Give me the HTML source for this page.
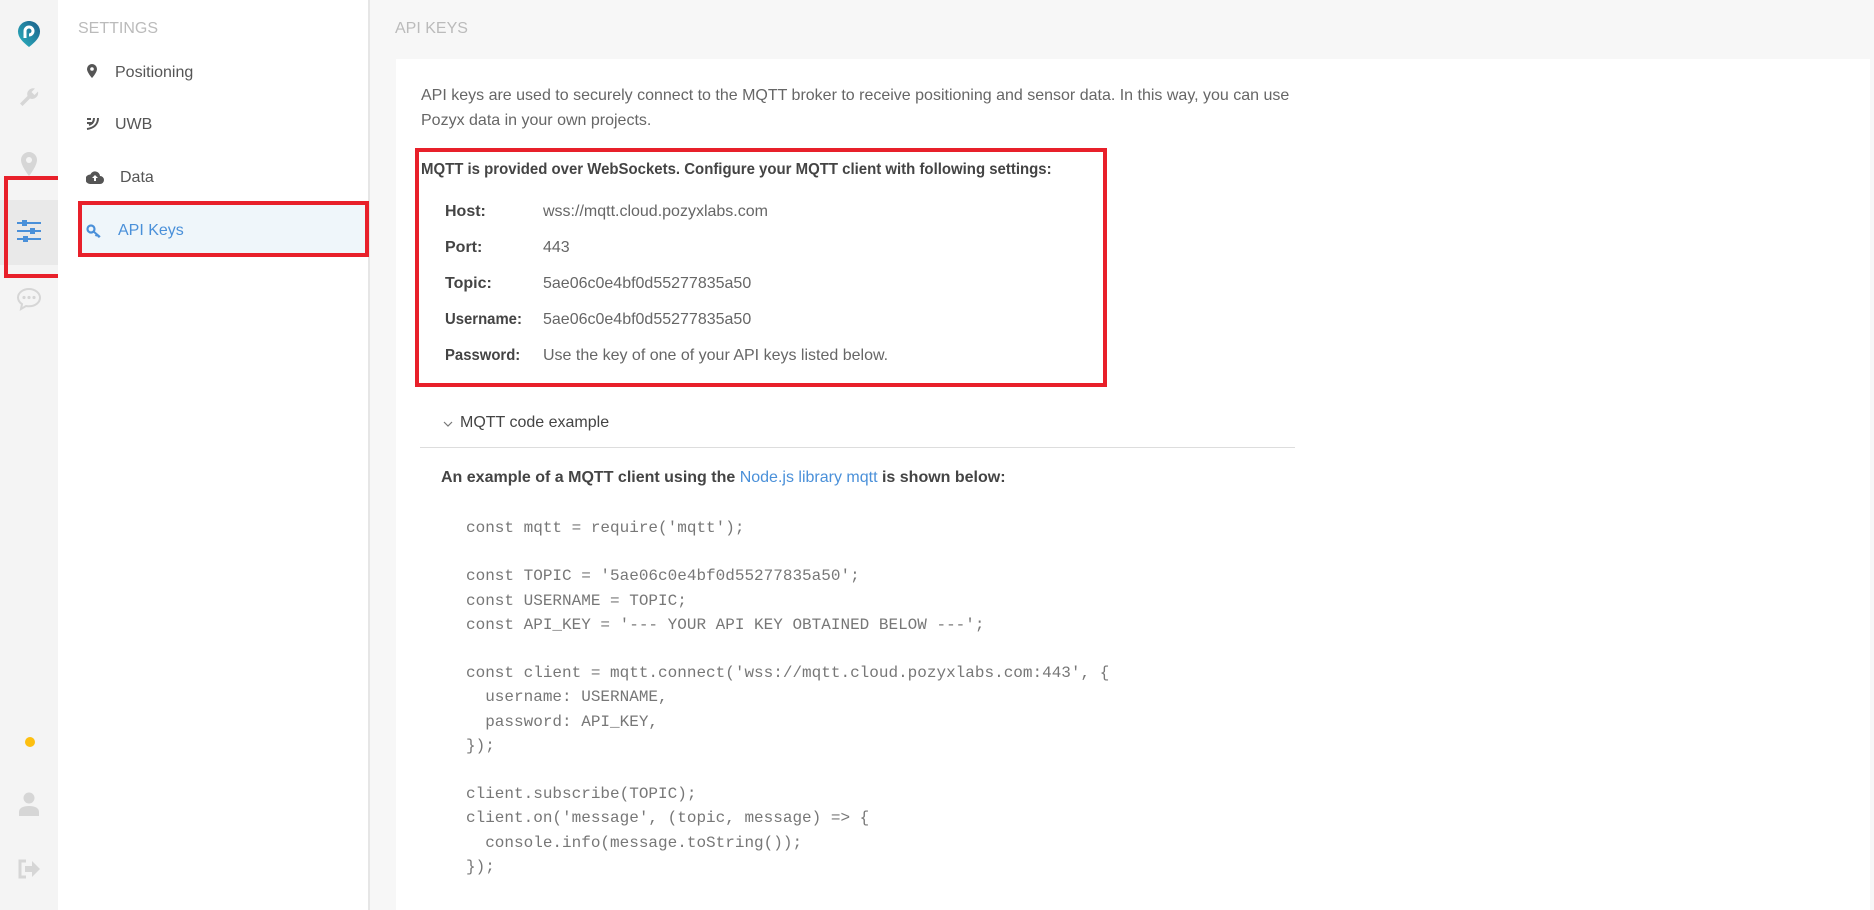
<!DOCTYPE html>
<html><head><meta charset="utf-8"><style>
*{margin:0;padding:0;box-sizing:border-box}
body{width:1874px;height:910px;overflow:hidden;background:#f7f7f7;font-family:"Liberation Sans",sans-serif;position:relative;color:#666}
.a{position:absolute}
#bar{left:0;top:0;width:58px;height:910px;background:#f4f4f4}
#menu{left:58px;top:0;width:312px;height:910px;background:#fff;border-right:2px solid #e6e6e6}
.t{position:absolute;font-size:16px;white-space:nowrap;color:#666}
.b{font-weight:bold;color:#444}
.code{position:absolute;left:466px;font-family:"Liberation Mono",monospace;font-size:16px;color:#777;white-space:pre;line-height:24.2px}
.red{position:absolute;border:4px solid #e8202a}
</style></head><body>
<div id="bar" class="a"></div>
<svg class="a" style="left:17px;top:20px" width="24" height="28" viewBox="0 0 24 28"><defs><linearGradient id="g" x1="0" y1="1" x2="1" y2="0"><stop offset="0" stop-color="#2bb3c0"/><stop offset="1" stop-color="#1c5f8a"/></linearGradient></defs><path d="M12 1C5.9 1 1 5.7 1 11.6c0 6 5 10.5 11 15.4 6-4.9 11-9.4 11-15.4C23 5.7 18.1 1 12 1z" fill="url(#g)"/><path d="M8 18v-7a4 4 0 1 1 4 4" stroke="#fff" stroke-width="3" fill="none"/></svg>
<svg class="a" style="left:17px;top:85px" width="24" height="24" viewBox="0 0 24 24"><path d="M21 6.5l-3.5 3.5-3-3L18 3.5A6 6 0 0 0 10.5 11L3 18.5 5.5 21 13 13.5A6 6 0 0 0 21 6.5z" fill="#d6d6d6"/></svg>
<svg class="a" style="left:19px;top:151px" width="20" height="26" viewBox="0 0 20 26"><path d="M10 1a8 8 0 0 0-8 8c0 6 8 16 8 16s8-10 8-16a8 8 0 0 0-8-8z" fill="#d6d6d6"/><circle cx="10" cy="9" r="3" fill="#f4f4f4"/></svg>
<div class="a" style="left:0;top:200px;width:58px;height:65px;background:#e9e9e9"></div>
<svg class="a" style="left:17px;top:220px" width="24" height="22" viewBox="0 0 24 22"><g stroke="#4a90d9" stroke-width="2"><line x1="0" y1="3" x2="24" y2="3"/><line x1="0" y1="11" x2="24" y2="11"/><line x1="0" y1="19" x2="24" y2="19"/></g><g fill="#4a90d9"><rect x="5" y="0" width="5" height="6"/><rect x="13" y="8" width="5" height="6"/><rect x="6" y="16" width="5" height="6"/></g></svg>
<svg class="a" style="left:16px;top:287px" width="26" height="24" viewBox="0 0 26 24"><path d="M13 2C6.9 2 2 5.8 2 10.5c0 2.7 1.6 5 4 6.6L5 22l5-3c1 .2 2 .3 3 .3 6.1 0 11-3.8 11-8.5S19.1 2 13 2z" fill="none" stroke="#d6d6d6" stroke-width="2"/><g fill="#d6d6d6"><circle cx="8" cy="10.5" r="1.6"/><circle cx="13" cy="10.5" r="1.6"/><circle cx="18" cy="10.5" r="1.6"/></g></svg>
<div class="a" style="left:25px;top:737px;width:10px;height:10px;border-radius:50%;background:#fdbf0f"></div>
<svg class="a" style="left:18px;top:792px" width="22" height="24" viewBox="0 0 22 24"><circle cx="11" cy="6" r="5.5" fill="#d6d6d6"/><path d="M1 24v-4c0-4 4-6 10-6s10 2 10 6v4z" fill="#d6d6d6"/></svg>
<svg class="a" style="left:17px;top:858px" width="24" height="22" viewBox="0 0 24 22"><path d="M9 3H3v16h6" fill="none" stroke="#d6d6d6" stroke-width="3"/><path d="M8 8h7V3l8 8-8 8v-5H8z" fill="#d6d6d6"/></svg>
<div class="red" style="left:4px;top:176px;width:59px;height:102px"></div>

<div id="menu" class="a"></div>
<div class="t" style="left:78px;top:20px;color:#bbb;font-size:16px">SETTINGS</div>
<svg class="a" style="left:87px;top:64px" width="10" height="14" viewBox="0 0 10 14"><path d="M5 0a5 5 0 0 0-5 5c0 3.5 5 9 5 9s5-5.5 5-9a5 5 0 0 0-5-5z" fill="#555"/><circle cx="5" cy="5" r="1.8" fill="#fff"/></svg>
<div class="t" style="left:115px;top:64px;color:#555">Positioning</div>
<svg class="a" style="left:86px;top:117px" width="14" height="13" viewBox="0 0 14 13"><path d="M1 2h4M1 6h6M12 1c0 6-4 10-11 11M8 1c0 4-2 6-5 7" stroke="#555" stroke-width="2" fill="none"/></svg>
<div class="t" style="left:115px;top:116px;color:#555">UWB</div>
<svg class="a" style="left:86px;top:171px" width="18" height="13" viewBox="0 0 18 13"><path d="M14 5a5 5 0 0 0-9.6-1.5A4 4 0 0 0 4 13h10a4 4 0 0 0 0-8z" fill="#555"/><path d="M9 4l-3 3h2v3h2V7h2z" fill="#fff"/></svg>
<div class="t" style="left:120px;top:169px;color:#555">Data</div>
<div class="a" style="left:79px;top:204px;width:290px;height:52px;background:#eff6fa"></div>
<svg class="a" style="left:86px;top:224px" width="16" height="14" viewBox="0 0 16 14"><circle cx="5" cy="5" r="3.5" fill="none" stroke="#4a90d9" stroke-width="2.2"/><path d="M7.5 7.5L14 13M11 10.5l-1.5 1.5M13 12l-1.2 1.2" stroke="#4a90d9" stroke-width="2" fill="none"/></svg>
<div class="t" style="left:118px;top:222px;color:#4a90d9">API Keys</div>
<div class="red" style="left:78px;top:201px;width:291px;height:56px"></div>

<div class="t" style="left:395px;top:20px;color:#bbb">API KEYS</div>
<div class="a" style="left:396px;top:59px;width:1474px;height:851px;background:#fff"></div>
<div class="t" style="left:421px;top:87px">API keys are used to securely connect to the MQTT broker to receive positioning and sensor data. In this way, you can use</div>
<div class="t" style="left:421px;top:112px">Pozyx data in your own projects.</div>
<div class="t b" style="left:421px;top:161px;transform:scaleX(.935);transform-origin:left">MQTT is provided over WebSockets. Configure your MQTT client with following settings:</div>
<div class="t b" style="left:445px;top:203px">Host:</div><div class="t" style="left:543px;top:203px">wss://mqtt.cloud.pozyxlabs.com</div>
<div class="t b" style="left:445px;top:239px">Port:</div><div class="t" style="left:543px;top:239px">443</div>
<div class="t b" style="left:445px;top:275px">Topic:</div><div class="t" style="left:543px;top:275px">5ae06c0e4bf0d55277835a50</div>
<div class="t b" style="left:445px;top:311px;transform:scaleX(.93);transform-origin:left">Username:</div><div class="t" style="left:543px;top:311px">5ae06c0e4bf0d55277835a50</div>
<div class="t b" style="left:445px;top:347px;transform:scaleX(.93);transform-origin:left">Password:</div><div class="t" style="left:543px;top:347px">Use the key of one of your API keys listed below.</div>
<div class="red" style="left:415px;top:148px;width:692px;height:239px"></div>
<svg class="a" style="left:443px;top:421px" width="10" height="7" viewBox="0 0 10 7"><path d="M1 1l4 4 4-4" stroke="#777" stroke-width="1.2" fill="none"/></svg>
<div class="t" style="left:460px;top:414px;color:#444">MQTT code example</div>
<div class="a" style="left:420px;top:447px;width:875px;height:1px;background:#ddd"></div>
<div class="t b" style="left:441px;top:469px">An example of a MQTT client using the <span style="color:#4a90d9;font-weight:normal">Node.js library mqtt</span> is shown below:</div>
<div class="code" style="top:516px">const mqtt = require('mqtt');

const TOPIC = '5ae06c0e4bf0d55277835a50';
const USERNAME = TOPIC;
const API_KEY = '--- YOUR API KEY OBTAINED BELOW ---';

const client = mqtt.connect('wss://mqtt.cloud.pozyxlabs.com:443', {
  username: USERNAME,
  password: API_KEY,
});

client.subscribe(TOPIC);
client.on('message', (topic, message) =&gt; {
  console.info(message.toString());
});</div>
</body></html>
